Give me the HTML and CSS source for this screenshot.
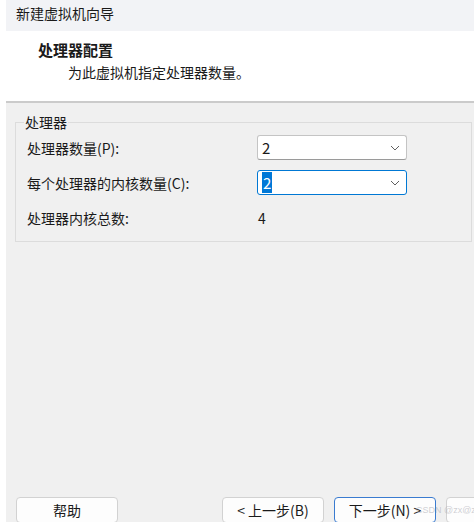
FILE: index.html
```html
<!DOCTYPE html>
<html lang="zh-CN">
<head>
    <meta charset="UTF-8">
    <meta name="viewport" content="width=device-width, initial-scale=1.0">
    <title>新建虚拟机向导</title>
    <link rel="stylesheet" href="styles.css">
</head>
<body>
    <div class="wizard">
        <div class="title-bar">新建虚拟机向导</div>
        <div class="header">
            <h1 class="header-title">处理器配置</h1>
            <p class="header-sub">为此虚拟机指定处理器数量。</p>
        </div>
        <div class="panel">
            <fieldset class="group">
                <legend>处理器</legend>
                <div class="row">
                    <label class="row-label" for="cpu-count">处理器数量(P):</label>
                    <div class="combo" id="cpu-count">
                        <span class="combo-value">2</span>
                        <svg class="chevron" width="10" height="6" viewBox="0 0 10 6"><path d="M1 1 L5 5 L9 1" fill="none" stroke="#606060" stroke-width="1"/></svg>
                    </div>
                </div>
                <div class="row">
                    <label class="row-label" for="core-count">每个处理器的内核数量(C):</label>
                    <div class="combo focused" id="core-count">
                        <span class="combo-value"><span class="selected">2</span></span>
                        <svg class="chevron" width="10" height="6" viewBox="0 0 10 6"><path d="M1 1 L5 5 L9 1" fill="none" stroke="#606060" stroke-width="1"/></svg>
                    </div>
                </div>
                <div class="row">
                    <span class="row-label">处理器内核总数:</span>
                    <span class="total">4</span>
                </div>
            </fieldset>
            <div class="footer">
                <button class="btn">帮助</button>
                <div class="spacer"></div>
                <button class="btn">&lt; 上一步(B)</button>
                <button class="btn default">下一步(N) &gt;</button>
                <button class="btn">取消</button>
            </div>
        </div>
        <span class="watermark">CSDN @zx@zx</span>
    </div>
</body>
</html>
```

FILE: styles.css
```css
body {
    margin: 0;
    height: 522px;
    overflow: hidden;
    background-color: #ffffff;
    font-family: "Noto Sans CJK SC", "Noto Sans", sans-serif;
    font-size: 14px;
    color: #1a1a1a;
}

.wizard {
    position: relative;
    width: 542px;
    height: 523px;
    margin-left: 6px;
    display: flex;
    flex-direction: column;
}

.title-bar {
    height: 31px;
    line-height: 27px;
    padding-left: 10px;
    background-color: #f2f3f6;
    font-size: 14px;
}

.header {
    height: 70px;
    background-color: #ffffff;
    padding-left: 32px;
    border-bottom: 2px solid #cbcbcb;
}

.header-title {
    margin: 0;
    padding-top: 8px;
    font-size: 15px;
    line-height: 22px;
    font-weight: bold;
}

.header-sub {
    margin: 0;
    padding-left: 30px;
    line-height: 22px;
    font-size: 14px;
}

.panel {
    flex: 1;
    display: flex;
    flex-direction: column;
    background-color: #f0f0f0;
}

.group {
    width: 457px;
    margin: 9px 0 0 9px;
    padding: 0 0 11px 11px;
    border: 1px solid #dcdcdc;
    box-sizing: border-box;
}

.group legend {
    margin-left: -3px;
    padding: 0 1px;
    line-height: 20px;
    font-size: 14px;
}

.row {
    display: flex;
    align-items: center;
    height: 25px;
    margin-top: 10px;
}

.row:first-of-type {
    margin-top: 3px;
}

.row-label {
    width: 230px;
}

.combo {
    width: 150px;
    height: 25px;
    box-sizing: border-box;
    display: flex;
    align-items: center;
    justify-content: space-between;
    padding: 0 6px 0 4px;
    background-color: #ffffff;
    border: 1px solid #c4c4c4;
    border-bottom-color: #9a9a9a;
    border-radius: 3px;
    font-size: 15px;
}

.combo.focused {
    border-color: #0078d4;
}

.selected {
    background-color: #0078d7;
    color: #ffffff;
    padding: 0 1px;
}

.total {
    padding-left: 1px;
    font-size: 14px;
}

.footer {
    margin-top: auto;
    display: flex;
    gap: 10px;
    padding-left: 10px;
}

.spacer {
    flex: 1;
}

.btn {
    width: 102px;
    height: 26px;
    padding: 0;
    font-family: inherit;
    font-size: 14px;
    color: #1a1a1a;
    background-color: #fdfdfd;
    border: 1px solid #d2d2d2;
    border-radius: 4px;
}

.btn.default {
    border-color: #3a7bd0;
}

.watermark {
    position: absolute;
    left: 410px;
    top: 505px;
    font-family: "Liberation Sans", sans-serif;
    font-size: 9px;
    color: rgba(160, 160, 170, 0.5);
}
```
